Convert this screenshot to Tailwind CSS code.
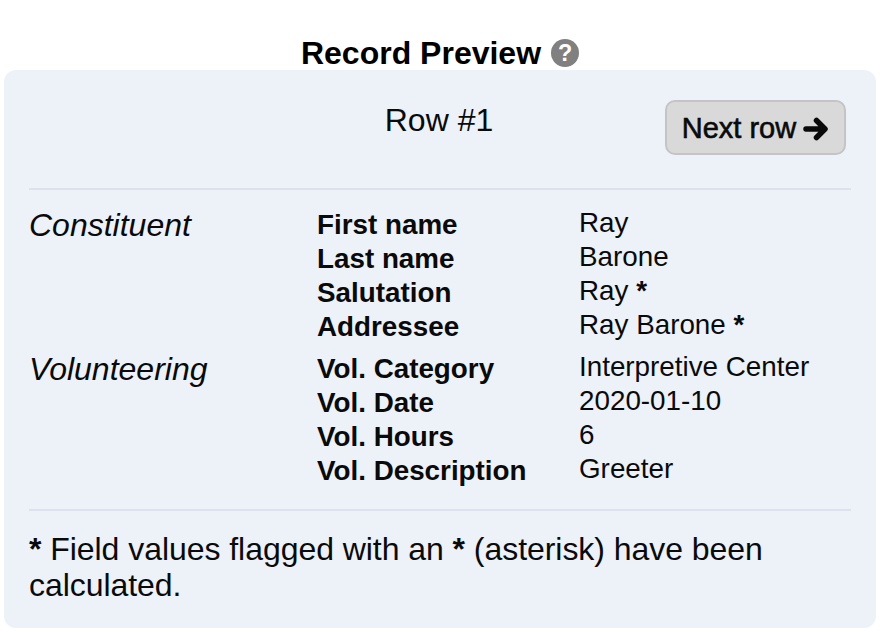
<!DOCTYPE html>
<html lang="en">
<head>
  <meta charset="UTF-8">
  <title>Record Preview</title>
  <script src="https://cdn.jsdelivr.net/npm/@tailwindcss/browser@4"></script>
</head>
<body class="bg-white font-['Liberation_Sans',Arial,sans-serif] text-[#0a0a0a] overflow-hidden">
  <div class="px-[4px] w-[880px]">
    <h2 class="pt-[36px] h-[70px] flex justify-center items-start gap-[10px] text-[32px] leading-[34px] font-bold text-black">
      <span>Record Preview</span>
      <svg class="w-[28px] h-[28px] mt-[3px]" viewBox="0 0 24 24"><circle cx="12" cy="12" r="12" fill="#808080"/><text x="12" y="19" text-anchor="middle" font-size="20" font-weight="700" fill="#fff" font-family="Liberation Sans">?</text></svg>
    </h2>
    <div class="bg-[#edf1f8] rounded-[12px] h-[558px] px-[25px]">
      <div class="relative h-[120px] border-b-2 border-[#dde2ec]">
        <div class="pt-[32px] text-center text-[32px] leading-[36px] pr-[2px]">Row #1</div>
        <button class="absolute right-[5px] top-[30px] w-[181px] h-[55px] pt-[2px] rounded-[10px] bg-[#d9d9d9] border-2 border-[#c4c4c4] text-[29px] [-webkit-text-stroke:0.6px_#0a0a0a] flex items-center justify-center gap-[7px]">
          Next row
          <svg class="w-[26px] h-[24px]" viewBox="0 0 26 24"><path d="M3 12h18M13.500 3.500l8.500 8.500-8.500 8.500" fill="none" stroke="#0a0a0a" stroke-width="5.500" stroke-linecap="round" stroke-linejoin="round"/></svg>
        </button>
      </div>
      <div class="border-b-2 border-[#dde2ec] h-[321px] pt-[18px]">
        <div class="grid grid-cols-[288px_262px_1fr] text-[27.8px] leading-[34px] mb-[8px]">
          <div class="italic text-[32px] row-span-4">Constituent</div>
          <div class="font-bold">First name</div><div class="-mt-[2px]">Ray</div>
          <div class="font-bold">Last name</div><div class="-mt-[2px]">Barone</div>
          <div class="font-bold">Salutation</div><div class="-mt-[2px]">Ray <b>*</b></div>
          <div class="font-bold">Addressee</div><div class="-mt-[2px]">Ray Barone <b>*</b></div>
        </div>
        <div class="grid grid-cols-[288px_262px_1fr] text-[27.8px] leading-[34px]">
          <div class="italic text-[32px] row-span-4">Volunteering</div>
          <div class="font-bold">Vol. Category</div><div class="-mt-[2px]">Interpretive Center</div>
          <div class="font-bold">Vol. Date</div><div class="-mt-[2px]">2020-01-10</div>
          <div class="font-bold">Vol. Hours</div><div class="-mt-[2px]">6</div>
          <div class="font-bold">Vol. Description</div><div class="-mt-[2px]">Greeter</div>
        </div>
      </div>
      <p class="pt-[20px] text-[32px] leading-[36px] tracking-[-0.05px]"><b>*</b> Field values flagged with an <b>*</b> (asterisk) have been calculated.</p>
    </div>
  </div>
</body>
</html>
